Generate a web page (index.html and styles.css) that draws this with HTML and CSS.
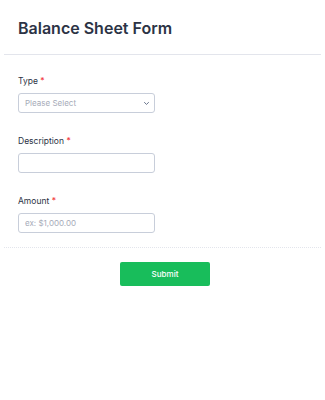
FILE: index.html
```html
<!DOCTYPE html>
<html lang="en">
<head>
  <meta charset="UTF-8" />
  <meta name="viewport" content="width=device-width, initial-scale=1.0" />
  <title>Balance Sheet Form</title>
  <link rel="stylesheet" href="styles.css">
</head>
<body>
  <div class="form">
    <header class="form-header">
      <h1>Balance Sheet Form</h1>
    </header>

    <div class="fields">
      <!-- Type -->
      <div class="field">
        <label for="type">Type <span class="req">*</span></label>
        <div class="select-wrap">
          <select id="type">
            <option>Please Select</option>
            <option>Asset</option>
            <option>Liability</option>
            <option>Equity</option>
          </select>
          <svg class="chevron" width="7" height="5" viewBox="0 0 7 5"><path d="M1.2 1.2l2.3 2.2 2.3-2.2" fill="none" stroke="#57647e" stroke-width="0.9"/></svg>
        </div>
      </div>

      <!-- Description -->
      <div class="field">
        <label for="description">Description <span class="req">*</span></label>
        <input type="text" id="description" />
      </div>

      <!-- Amount -->
      <div class="field">
        <label for="amount">Amount <span class="req">*</span></label>
        <input type="text" id="amount" placeholder="ex: $1,000.00" />
      </div>
    </div>

    <div class="form-footer">
      <button class="submit-button">Submit</button>
    </div>
  </div>
</body>
</html>
```

FILE: styles.css
```css
body {
  margin: 0;
  font-family: Inter, "Noto Sans", sans-serif;
  background-color: #fff;
  color: #2c3345;
}

.form {
  padding: 0 4px;
}

.form-header {
  padding: 18px 14px 15px;
  border-bottom: 1px solid #e3e5ec;
}

.form-header h1 {
  margin: 0;
  font-size: 16px;
  line-height: 21px;
  font-weight: 600;
  color: #2c3345;
}

.fields {
  padding: 20px 14px 0;
}

.field {
  display: flex;
  flex-direction: column;
  gap: 6px;
  margin-bottom: 22px;
}

.field label {
  font-size: 8.5px;
  line-height: 12px;
  font-weight: 400;
  color: #2c3345;
}

.req {
  color: #f23a3c;
}

.field input,
.field select {
  box-sizing: border-box;
  width: 137px;
  height: 20px;
  margin: 0;
  padding: 0 6px;
  border: 1px solid #c8ceda;
  border-radius: 3px;
  background: #fff;
  font-family: Inter, "Noto Sans", sans-serif;
  font-size: 8px;
  color: #2c3345;
  outline: none;
}

.field input::placeholder {
  color: #a6abb8;
}

.select-wrap {
  position: relative;
  width: 137px;
}

.field select {
  display: block;
  appearance: none;
  -webkit-appearance: none;
  color: #a6abb8;
}

.chevron {
  position: absolute;
  right: 5px;
  top: 8px;
  pointer-events: none;
}

.form-footer {
  margin-top: -8px;
  padding: 14px 0 0 5px;
  border-top: 1px dotted #e3e5ec;
  display: flex;
  justify-content: center;
}

.submit-button {
  width: 90px;
  height: 24px;
  background-color: #18bd5b;
  color: #fff;
  font-family: Inter, "Noto Sans", sans-serif;
  font-size: 8px;
  font-weight: 500;
  border: none;
  border-radius: 2px;
  cursor: pointer;
}
```
